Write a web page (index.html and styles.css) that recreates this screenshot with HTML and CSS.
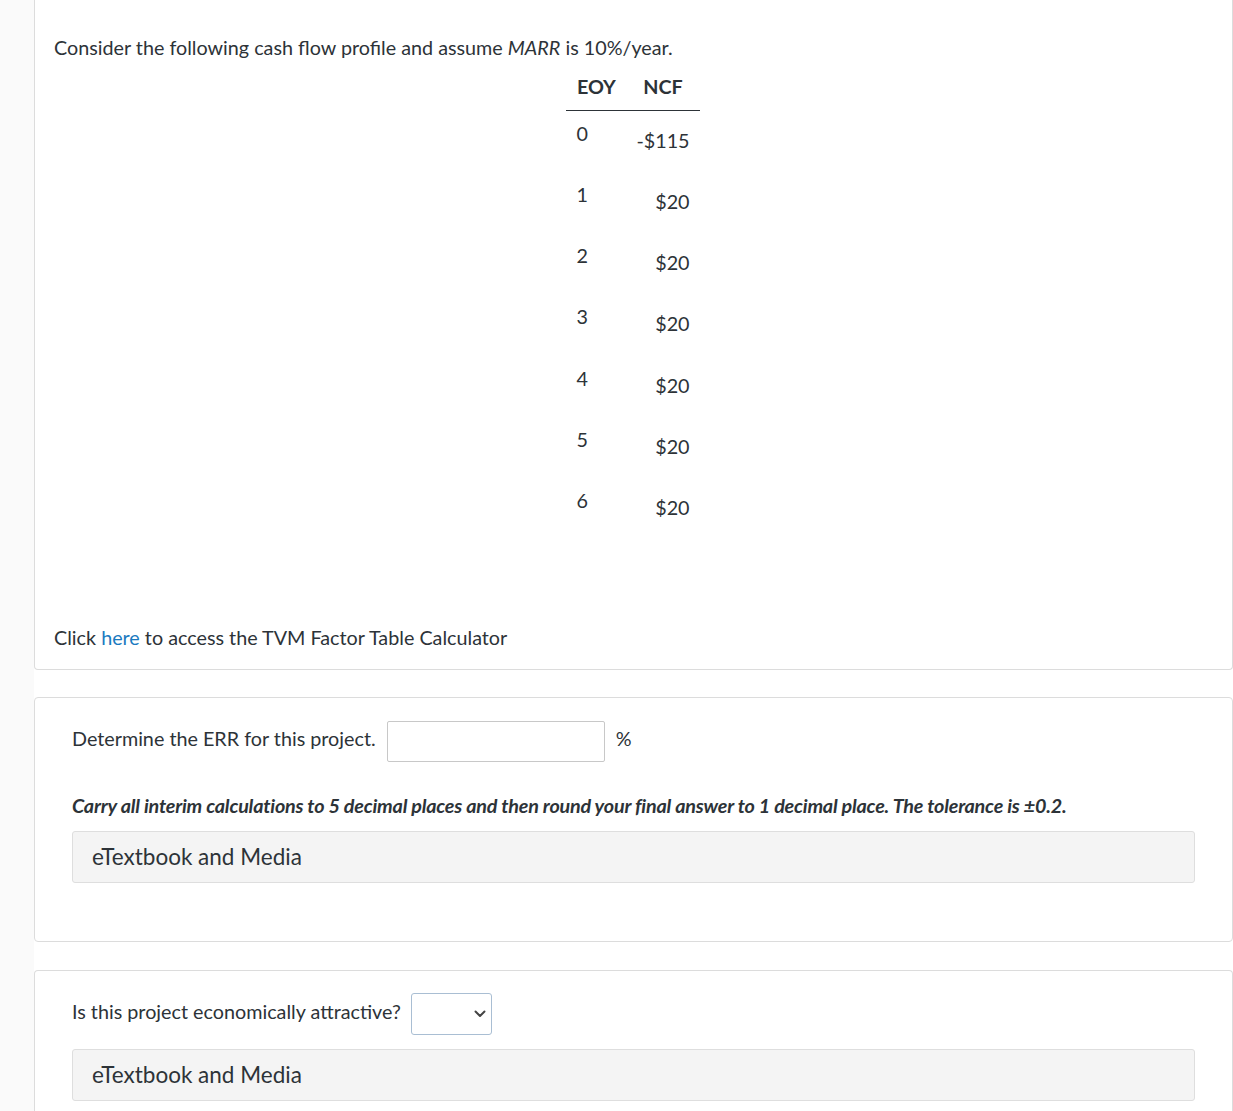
FILE: index.html
```html
<!DOCTYPE html>
<html lang="en">
<head>
<meta charset="utf-8">
<title>ERR question</title>
<link rel="stylesheet" href="styles.css">
</head>
<body>
<div class="layout">
  <div class="rail"></div>
  <main class="main">
    <section class="panel panel-top">
      <p class="intro">Consider the following cash flow profile and assume <em>MARR</em> is 10%/year.</p>
      <table class="cf">
        <thead>
          <tr><th class="c-eoy">EOY</th><th class="c-ncf">NCF</th></tr>
        </thead>
        <tbody>
          <tr><td class="c-eoy">0</td><td class="c-ncf">-$115</td></tr>
          <tr><td class="c-eoy">1</td><td class="c-ncf">$20</td></tr>
          <tr><td class="c-eoy">2</td><td class="c-ncf">$20</td></tr>
          <tr><td class="c-eoy">3</td><td class="c-ncf">$20</td></tr>
          <tr><td class="c-eoy">4</td><td class="c-ncf">$20</td></tr>
          <tr><td class="c-eoy">5</td><td class="c-ncf">$20</td></tr>
          <tr><td class="c-eoy">6</td><td class="c-ncf">$20</td></tr>
        </tbody>
      </table>
      <p class="calc">Click <a href="#" class="link">here</a> to access the TVM Factor Table Calculator</p>
    </section>

    <section class="panel panel-q">
      <div class="q-row">
        <span class="q-label">Determine the ERR for this project.</span>
        <input class="num-input" type="text" aria-label="ERR">
        <span class="unit">%</span>
      </div>
      <p class="note">Carry all interim calculations to 5 decimal places and then round your final answer to 1 decimal place. The tolerance is ±0.2.</p>
      <div class="media">eTextbook and Media</div>
    </section>

    <section class="panel panel-q panel-last">
      <div class="q-row q-row-2">
        <span class="q-label">Is this project economically attractive?</span>
        <span class="select-wrap">
          <select class="sel" aria-label="attractive"><option></option><option>Yes</option><option>No</option></select>
          <svg class="chev" width="12" height="8" viewBox="0 0 12 8" aria-hidden="true"><path d="M1.5 1.5 L6 6 L10.5 1.5" fill="none" stroke="#444" stroke-width="2" stroke-linecap="round" stroke-linejoin="round"/></svg>
        </span>
      </div>
      <div class="media media-2">eTextbook and Media</div>
    </section>
  </main>
</div>
</body>
</html>
```

FILE: styles.css
```css
* { box-sizing: border-box; }

html, body {
  margin: 0;
  padding: 0;
  background: #ffffff;
}

body {
  font-family: Lato, "Open Sans", "Liberation Sans", sans-serif;
  font-size: 19.75px;
  line-height: 26px;
  color: #2d3338;
}

.layout {
  display: flex;
  min-height: 1111px;
}

.rail {
  width: 34px;
  flex: 0 0 34px;
  background: #fafafa;
}

.main {
  flex: 1;
  display: flex;
  flex-direction: column;
  gap: 27px;
  background: #fff;
}

.panel {
  border: 1px solid #dcdcdc;
  border-radius: 4px;
}

.panel-top {
  border-top: none;
  border-radius: 0 0 4px 4px;
  padding: 35px 20px 18px 19px;
}

.intro {
  margin: 0;
}

.intro em {
  font-style: italic;
}

.cf {
  border-collapse: collapse;
  margin: 3px auto 0;
}

.cf th {
  font-weight: 700;
  padding: 10px 10px 10px;
  border-bottom: 1px solid #2d3338;
  text-align: center;
}

.cf td {
  height: 61.3px;
  vertical-align: top;
  padding: 0 10px;
}

.cf td.c-eoy {
  text-align: left;
  padding-top: 10px;
  width: 60px;
}

.cf td.c-ncf {
  text-align: right;
  padding-top: 17px;
  width: 73px;
}

.calc {
  margin: 85px 0 0;
}

.link {
  color: #1a7abf;
  text-decoration: none;
}

.panel-q {
  padding: 23px 37px 58px;
}

.q-row {
  display: flex;
  align-items: center;
  gap: 11px;
}

.q-label,
.unit {
  margin-bottom: 5px;
}

.num-input {
  width: 218px;
  height: 41px;
  border: 1px solid #c8c8c8;
  border-radius: 2px;
  font: inherit;
  padding: 0 8px;
  background: #fff;
}

.note {
  margin: 31px 0 12px;
  font-weight: 700;
  font-style: italic;
  letter-spacing: -0.2px;
}

.media {
  background: #f4f4f4;
  border: 1px solid #dedede;
  border-radius: 3px;
  height: 52px;
  padding: 0 19px;
  display: flex;
  align-items: center;
  font-size: 22.5px;
}

.panel-last {
  margin-top: 1px;
  padding: 22px 37px 30px;
  border-bottom: none;
  border-radius: 4px 4px 0 0;
  flex: 1;
}

.q-row-2 {
  gap: 10px;
}

.q-row-2 .q-label {
  margin-bottom: 3px;
}

.select-wrap {
  position: relative;
  display: inline-block;
  width: 81px;
  height: 42px;
}

.sel {
  appearance: none;
  -webkit-appearance: none;
  width: 100%;
  height: 100%;
  border: 1px solid #a9bed3;
  border-radius: 3px;
  background: #fff;
  font: inherit;
}

.chev {
  position: absolute;
  right: 6px;
  top: 17px;
  pointer-events: none;
}

.media-2 {
  margin-top: 14px;
}
```
